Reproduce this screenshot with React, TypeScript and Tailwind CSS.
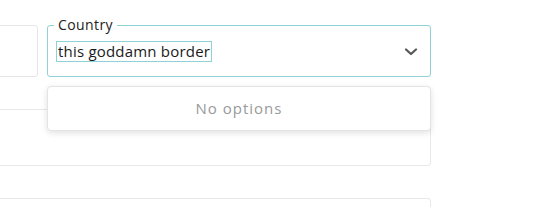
import React from 'react';

const font = { fontFamily: '"Open Sans", "Lato", sans-serif' };

const Chevron: React.FC = () => (
  <svg width="14" height="10" viewBox="0 0 14 10" className="text-[#555]">
    <path d="M2 2.5 L7 7 L12 2.5" fill="none" stroke="currentColor" strokeWidth="2.2" strokeLinecap="round" strokeLinejoin="round" />
  </svg>
);

export default function App() {
  return (
    <div className="w-[555px] h-[207px] overflow-hidden bg-white" style={font}>
      <div className="ml-[-300px] w-[731px] pt-[17px] flex flex-col">
        {/* row 1 */}
        <div className="flex gap-[9px] items-end">
          <div className="flex-1 h-[52px] border border-[#e6e6e6] rounded-[3px]" />
          <div className="relative w-[384px]">
            <fieldset className="h-[60px] border border-[#8ed2d8] rounded-[3px] pl-[8px] pr-[11px] flex items-center">
              <legend className="px-[4px] ml-[-2px] text-[14px] leading-[16px] text-[#222] tracking-[0.4px]">Country</legend>
              <div className="flex-1 flex items-center -mt-[7px]">
                <span className="border border-[#8ed2d8] px-[1px] h-[21px] leading-[19px] text-[15px] text-[#1a1a1a] tracking-[0.2px]">this goddamn border</span>
              </div>
              <div className="-mt-[6px] mr-[1px]"><Chevron /></div>
            </fieldset>
            {/* menu */}
            <div className="absolute left-0 right-0 top-[69px] h-[45px] bg-white border border-[#e4e4e4] rounded-[4px] shadow-[0_2px_6px_rgba(0,0,0,0.12)] z-10 flex items-center justify-center">
              <span className="text-[15px] text-[#999] tracking-[1px]">No options</span>
            </div>
          </div>
        </div>
        {/* row 2 */}
        <div className="mt-[32px] h-[57px] border border-[#e8e8e8] rounded-[3px]" />
        {/* row 3 */}
        <div className="mt-[32px] h-[57px] border border-[#e8e8e8] rounded-[3px]" />
      </div>
    </div>
  );
}
